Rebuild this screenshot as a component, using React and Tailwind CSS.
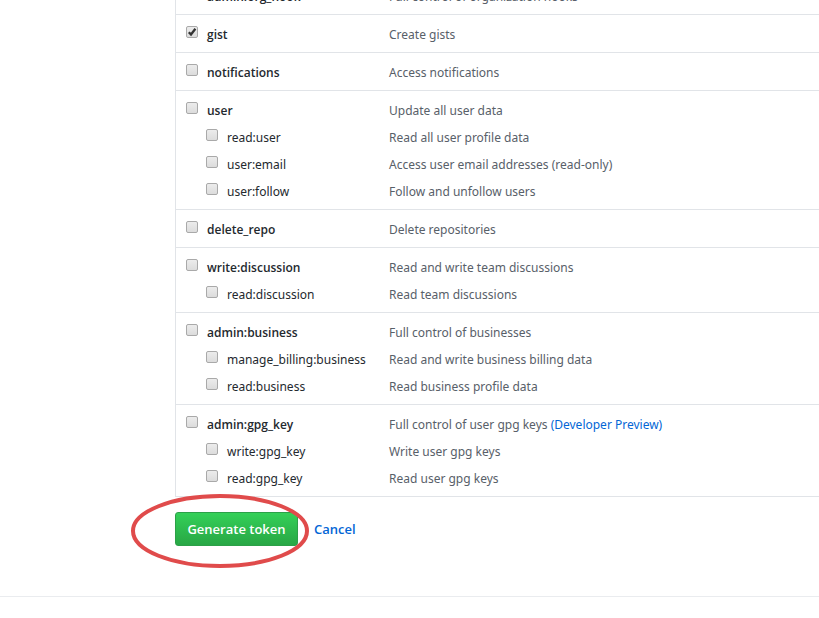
import { useState } from "react";

const scopeGroups = [
  [{ name: "admin:org_hook", text: "Full control of organization hooks" }],
  [{ name: "gist", text: "Create gists" }],
  [{ name: "notifications", text: "Access notifications" }],
  [
    { name: "user", text: "Update all user data" },
    { name: "read:user", text: "Read all user profile data" },
    { name: "user:email", text: "Access user email addresses (read-only)" },
    { name: "user:follow", text: "Follow and unfollow users" },
  ],
  [{ name: "delete_repo", text: "Delete repositories" }],
  [
    { name: "write:discussion", text: "Read and write team discussions" },
    { name: "read:discussion", text: "Read team discussions" },
  ],
  [
    { name: "admin:business", text: "Full control of businesses" },
    { name: "manage_billing:business", text: "Read and write business billing data" },
    { name: "read:business", text: "Read business profile data" },
  ],
  [
    { name: "admin:gpg_key", text: "Full control of user gpg keys", preview: true },
    { name: "write:gpg_key", text: "Write user gpg keys" },
    { name: "read:gpg_key", text: "Read user gpg keys" },
  ],
];

function Checkbox({ id, checked, onChange }) {
  return (
    <span className="relative mt-1.5 h-[13px] w-[13px] shrink-0">
      <input
        id={id}
        type="checkbox"
        checked={checked}
        onChange={onChange}
        className="block h-3 w-3 appearance-none rounded-[2px] border border-[#a9a9a9] bg-linear-to-b from-[#ececec] to-[#dcdcdc]"
      />
      {checked && (
        <svg viewBox="0 0 12 12" className="pointer-events-none absolute top-0 left-0 h-3 w-3">
          <path d="M2.8 6.2 L5 8.5 L9.4 2.8" fill="none" stroke="#333" strokeWidth="2.3" />
        </svg>
      )}
    </span>
  );
}

function Scope({ scope, child, checked, onToggle }) {
  return (
    <div className="flex h-[27px] text-[12px]">
      <div className={child ? "flex w-[203px] shrink-0 gap-2 pl-5" : "flex w-[203px] shrink-0 gap-2"}>
        <Checkbox id={scope.name} checked={checked} onChange={() => onToggle(scope.name)} />
        <label
          htmlFor={scope.name}
          className={
            child
              ? "font-['Noto_Sans',sans-serif] leading-[29px] whitespace-nowrap"
              : "leading-[29px] font-semibold whitespace-nowrap"
          }
        >
          {scope.name}
        </label>
      </div>
      <span className="font-['Noto_Sans',sans-serif] leading-[29px] whitespace-nowrap text-[#586069]">
        {scope.text}
        {scope.preview && (
          <>
            {" "}
            <a href="#preview" className="text-[#0366d6]">(Developer Preview)</a>
          </>
        )}
      </span>
    </div>
  );
}

export default function App() {
  const [selected, setSelected] = useState(["gist"]);

  function toggle(name) {
    setSelected(selected.includes(name) ? selected.filter((n) => n !== name) : [...selected, name]);
  }

  return (
    <div className="overflow-hidden bg-white font-['Open_Sans',sans-serif] text-[13px] text-[#24292e]">
      <form className="pl-[175px]" onSubmit={(e) => e.preventDefault()}>
        <div className="-mt-6 border-b border-l border-[#e1e4e8]">
          {scopeGroups.map((group) => (
            <div key={group[0].name} className="border-t border-[#e1e4e8] py-[5px] pl-2.5">
              {group.map((scope, i) => (
                <Scope
                  key={scope.name}
                  scope={scope}
                  child={i > 0}
                  checked={selected.includes(scope.name)}
                  onToggle={toggle}
                />
              ))}
            </div>
          ))}
        </div>

        <div className="flex items-center gap-4 pt-[15px]">
          <div className="relative">
            <button
              type="submit"
              className="block h-[34px] w-[123px] rounded-[3px] border border-[#2ca048] bg-linear-to-b from-[#34d058] to-[#28a745] pt-px font-semibold whitespace-nowrap text-white"
            >
              Generate token
            </button>
            {/* hand-drawn highlight ring around the button */}
            <svg
              viewBox="0 0 180 76"
              className="pointer-events-none absolute -top-[19px] -left-[45px] h-[76px] w-[180px] max-w-none"
            >
              <ellipse cx="90" cy="38" rx="87" ry="35" fill="none" stroke="#e04b4b" strokeWidth="4" />
            </svg>
          </div>
          <a href="#cancel" className="pt-px font-semibold text-[#0366d6]">Cancel</a>
        </div>
      </form>

      <footer className="mt-[50px] h-[22px] border-t border-[#eaecef]" />
    </div>
  );
}
